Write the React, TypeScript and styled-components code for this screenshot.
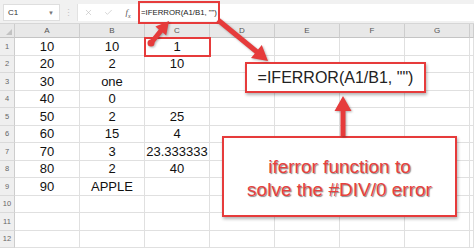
import { Fragment } from 'react';
import styled, { createGlobalStyle } from 'styled-components';
import { X, Check } from 'lucide-react';

const RED = '#e63b3b';

const GlobalStyle = createGlobalStyle`
  body {
    margin: 0;
    background: #fff;
    font-family: "Liberation Sans", Arial, sans-serif;
  }
`;

const Page = styled.div`
  position: relative;
  width: 474px;
  height: 248px;
  overflow: hidden;
  background: #fff;
`;

const Toolbar = styled.div`
  display: flex;
  align-items: stretch;
  height: 17px;
  padding: 4px 0 2px 3px;
  background: #f1f1f1;
  border-bottom: 1px solid #d6d6d6;
`;

const NameBox = styled.div`
  display: flex;
  align-items: center;
  justify-content: space-between;
  width: 57px;
  padding: 0 5px 0 4px;
  box-sizing: border-box;
  background: #fff;
  border: 1px solid #dedede;
  font-size: 8px;
  color: #333;
`;

const Caret = styled.span`
  font-size: 6px;
  color: #777;
`;

const Dots = styled.div`
  width: 17px;
  display: flex;
  align-items: center;
  justify-content: center;
  font-size: 9px;
  color: #c4c4c4;
`;

const FormulaBar = styled.div`
  flex: 1;
  display: flex;
  align-items: center;
  background: #fff;
  border-left: 1px solid #e2e2e2;
`;

const BarIcon = styled.span`
  width: 20px;
  display: flex;
  justify-content: center;
  color: #b8b8b8;
`;

const Fx = styled.span`
  width: 20px;
  text-align: center;
  font-family: "Liberation Serif", serif;
  font-style: italic;
  font-size: 9px;
  color: #555;

  sub {
    font-size: 6px;
  }
`;

const FormulaText = styled.span`
  position: relative;
  z-index: 2;
  margin-left: 3px;
  width: 76px;
  height: 100%;
  display: flex;
  align-items: center;
  justify-content: center;
  font-size: 7.8px;
  color: #222;
  outline: 2px solid ${RED};
  outline-offset: 1px;
`;

const Sheet = styled.div`
  display: grid;
  grid-template-columns: 15px repeat(7, 65px) 1fr;
  grid-template-rows: 14px repeat(12, 17.5px);
`;

const Cell = styled.div<{ $marked?: boolean }>`
  position: relative;
  display: flex;
  align-items: center;
  justify-content: center;
  box-sizing: border-box;
  border-right: 1px solid #e0e0e0;
  border-bottom: 1px solid #e0e0e0;
  font-size: 13px;
  color: #111;
  ${(p) =>
    p.$marked &&
    `
    z-index: 2;
    outline: 2px solid ${RED};
    outline-offset: -1px;
  `}
`;

const ColHead = styled.div`
  display: flex;
  align-items: center;
  justify-content: center;
  box-sizing: border-box;
  background: #e8e8e8;
  border-right: 1px solid #cdcdcd;
  border-bottom: 1px solid #c4c4c4;
  font-size: 8px;
  color: #555;
`;

const Corner = styled(ColHead)`
  position: relative;

  &::after {
    content: '';
    position: absolute;
    right: 2px;
    bottom: 2px;
    border-left: 6px solid transparent;
    border-bottom: 6px solid #c2c2c2;
  }
`;

const RowHead = styled.div`
  display: flex;
  align-items: center;
  justify-content: center;
  box-sizing: border-box;
  background: #efefef;
  border-right: 1px solid #cdcdcd;
  border-bottom: 1px solid #dadada;
  font-size: 7.5px;
  color: #666;
`;

const Callout = styled.div`
  position: absolute;
  z-index: 3;
  display: flex;
  flex-direction: column;
  align-items: center;
  justify-content: center;
  box-sizing: border-box;
  background: #fff;
  border: 2px solid ${RED};
  box-shadow: 1px 2px 3px rgba(0, 0, 0, 0.3);
`;

const FormulaCallout = styled(Callout)`
  left: 245px;
  top: 62px;
  width: 181px;
  height: 31px;
  font-size: 16px;
  color: #222;
`;

const NoteCallout = styled(Callout)`
  left: 222px;
  top: 136px;
  width: 235px;
  height: 81px;
  padding-top: 2px;
  font-size: 19px;
  line-height: 23px;
  color: #e8403c;
  text-shadow: 1px 1px 1px rgba(40, 40, 40, 0.55);
`;

const Arrows = styled.svg`
  position: absolute;
  left: 0;
  top: 0;
  z-index: 4;
  pointer-events: none;
  filter: drop-shadow(1px 1px 1px rgba(0, 0, 0, 0.3));
`;

const columns = ['A', 'B', 'C', 'D', 'E', 'F', 'G', ''];

const rows: [string, string, string][] = [
  ['10', '10', '1'],
  ['20', '2', '10'],
  ['30', 'one', ''],
  ['40', '0', ''],
  ['50', '2', '25'],
  ['60', '15', '4'],
  ['70', '3', '23.333333'],
  ['80', '2', '40'],
  ['90', 'APPLE', ''],
  ['', '', ''],
  ['', '', ''],
  ['', '', ''],
];

// shaft + triangular head from (x1,y1) to the tip (x2,y2)
const arrow = (x1: number, y1: number, x2: number, y2: number, shaft = 5, headW = 17, headL = 15) => {
  const len = Math.hypot(x2 - x1, y2 - y1);
  const ux = (x2 - x1) / len;
  const uy = (y2 - y1) / len;
  const px = -uy;
  const py = ux;
  const bx = x2 - ux * headL;
  const by = y2 - uy * headL;
  const pts = [
    [x1 + (px * shaft) / 2, y1 + (py * shaft) / 2],
    [bx + (px * shaft) / 2, by + (py * shaft) / 2],
    [bx + (px * headW) / 2, by + (py * headW) / 2],
    [x2, y2],
    [bx - (px * headW) / 2, by - (py * headW) / 2],
    [bx - (px * shaft) / 2, by - (py * shaft) / 2],
    [x1 - (px * shaft) / 2, y1 - (py * shaft) / 2],
  ];
  return pts.map((p) => p.map((v) => v.toFixed(1)).join(',')).join(' ');
};

export default function App() {
  return (
    <>
      <GlobalStyle />
      <Page>
        <Toolbar>
          <NameBox>
            C1 <Caret>▼</Caret>
          </NameBox>
          <Dots>⋮</Dots>
          <FormulaBar>
            <BarIcon>
              <X size={9} strokeWidth={1.5} />
            </BarIcon>
            <BarIcon>
              <Check size={9} strokeWidth={1.5} />
            </BarIcon>
            <Fx>
              f<sub>x</sub>
            </Fx>
            <FormulaText>=IFERROR(A1/B1, "")</FormulaText>
          </FormulaBar>
        </Toolbar>

        <Sheet>
          <Corner />
          {columns.map((c, i) => (
            <ColHead key={i}>{c}</ColHead>
          ))}
          {rows.map((r, ri) => (
            <Fragment key={ri}>
              <RowHead>{ri + 1}</RowHead>
              {columns.map((_, ci) => (
                <Cell key={ci} $marked={ri === 0 && ci === 2}>
                  {r[ci] ?? ''}
                </Cell>
              ))}
            </Fragment>
          ))}
        </Sheet>

        <FormulaCallout>=IFERROR(A1/B1, "")</FormulaCallout>
        <NoteCallout>
          <span>iferror function to</span>
          <span>solve the #DIV/0 error</span>
        </NoteCallout>

        <Arrows width={474} height={248}>
          <g fill={RED}>
            <circle cx={151} cy={43} r={3.5} />
            <polygon points={arrow(151, 43, 169, 21, 5, 14, 13)} />
            <polygon points={arrow(218, 20, 268, 61)} />
            <polygon points={arrow(343, 136, 343, 96)} />
          </g>
        </Arrows>
      </Page>
    </>
  );
}
